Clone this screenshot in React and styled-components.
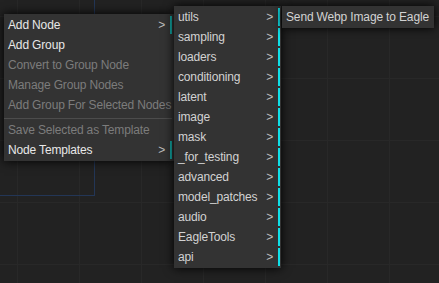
import React from "react";
import styled, { createGlobalStyle } from "styled-components";

const GlobalStyle = createGlobalStyle`
  html, body { margin: 0; padding: 0; background: #222; }
  * { box-sizing: border-box; }
`;

const Canvas = styled.div`
  position: relative;
  width: 439px;
  height: 283px;
  overflow: hidden;
  background-color: #222;
  background-image:
    linear-gradient(to right, #282828 1px, transparent 1px),
    linear-gradient(to bottom, #282828 1px, transparent 1px);
  background-size: 62px 62px;
  background-position: 17px 16px;
  font-family: Tahoma, "Liberation Sans", Arial, sans-serif;
  font-size: 12px;
  letter-spacing: -0.15px;
`;

const GroupOutline = styled.div`
  position: absolute;
  left: -20px;
  top: -20px;
  width: 115px;
  height: 216px;
  border: 1px solid #233656;
`;

const MenuStack = styled.div`
  position: absolute;
  left: 4px;
  top: 6px;
  display: flex;
  align-items: flex-start;
`;

const Menu = styled.div`
  position: relative;
  width: ${(p) => p.$width}px;
  margin-top: ${(p) => p.$offset || 0}px;
  margin-left: ${(p) => p.$gap || 0}px;
  display: flex;
  flex-direction: column;
  padding: 1px ${(p) => p.$padRight}px 1px 0;
  background: #333;
  box-shadow: 0 0 10px #000;
  z-index: ${(p) => p.$z};
`;

const Entry = styled.div`
  position: relative;
  height: 18px;
  line-height: 18px;
  margin: 1px 0;
  padding: 0 4px;
  white-space: nowrap;
  color: ${(p) => (p.$disabled ? "#7c7c7c" : p.$dim ? "#d2d2d2" : "#e8e8e8")};
  border-right: 2px solid
    ${(p) => (p.$submenu ? p.$accent : "transparent")};
`;

const Arrow = styled.span`
  position: absolute;
  right: 5px;
  top: 0;
  color: #bdbdbd;
`;

const Separator = styled.div`
  height: 1px;
  margin: 3px 0 1px 0;
  background: #4c4c4c;
`;

const mainItems = [
  { label: "Add Node", submenu: true },
  { label: "Add Group" },
  { label: "Convert to Group Node", disabled: true },
  { label: "Manage Group Nodes", disabled: true },
  { label: "Add Group For Selected Nodes", disabled: true },
  { separator: true },
  { label: "Save Selected as Template", disabled: true },
  { label: "Node Templates", submenu: true },
];

const subItems = [
  "utils",
  "sampling",
  "loaders",
  "conditioning",
  "latent",
  "image",
  "mask",
  "_for_testing",
  "advanced",
  "model_patches",
  "audio",
  "EagleTools",
  "api",
];

export default function App() {
  return (
    <>
      <GlobalStyle />
      <Canvas>
        <GroupOutline />
        <MenuStack>
          <Menu $width={170} $padRight={2} $z={1} $offset={8}>
            {mainItems.map((it, i) =>
              it.separator ? (
                <Separator key={i} />
              ) : (
                <Entry
                  key={i}
                  $disabled={it.disabled}
                  $submenu={it.submenu}
                  $accent="#12a9a6"
                >
                  {it.label}
                  {it.submenu && <Arrow>&gt;</Arrow>}
                </Entry>
              )
            )}
          </Menu>
          <Menu $width={107} $padRight={1} $z={2}>
            {subItems.map((s) => (
              <Entry key={s} $submenu $dim $accent="#10e0e8">
                {s}
                <Arrow>&gt;</Arrow>
              </Entry>
            ))}
          </Menu>
          <Menu $width={152} $padRight={0} $z={3} $gap={1}>
            <Entry $dim>Send Webp Image to Eagle</Entry>
          </Menu>
        </MenuStack>
      </Canvas>
    </>
  );
}
